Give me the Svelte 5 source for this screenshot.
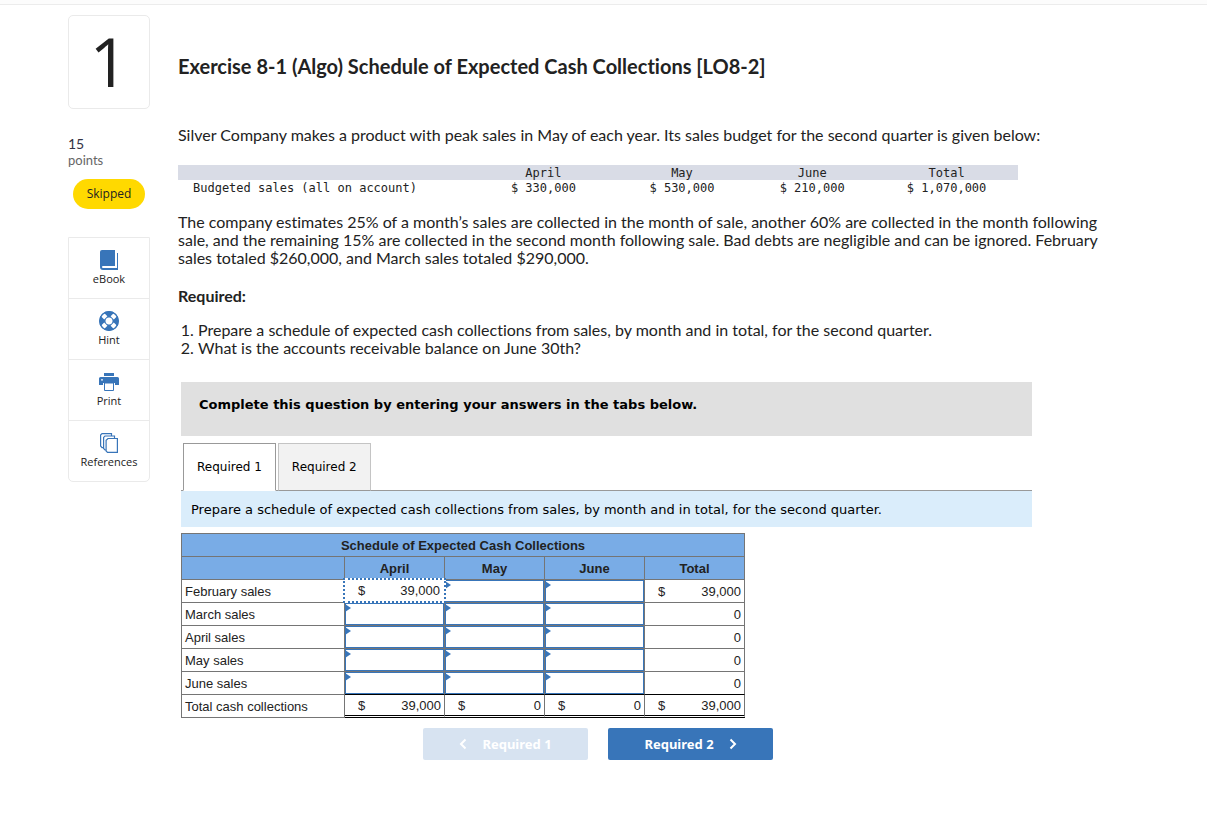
<!--
	Question page — one exercise with a sidebar of study tools, the question
	text, and a tabbed answer sheet.
-->

<script lang="ts">
	interface Row {
		label: string;
		cells: string[];
	}

	const months = ['April', 'May', 'June'];

	const budget = [
		{ head: 'April', value: '$ 330,000' },
		{ head: 'May', value: '$ 530,000' },
		{ head: 'June', value: '$ 210,000' },
		{ head: 'Total', value: '$ 1,070,000' }
	];

	const tabs = ['Required 1', 'Required 2'];

	let activeTab = $state(0);

	let rows = $state<Row[]>([
		{ label: 'February sales', cells: ['39,000', '', ''] },
		{ label: 'March sales', cells: ['', '', ''] },
		{ label: 'April sales', cells: ['', '', ''] },
		{ label: 'May sales', cells: ['', '', ''] },
		{ label: 'June sales', cells: ['', '', ''] }
	]);

	const toNumber = (text: string) => Number(text.replace(/[^0-9.-]/g, '')) || 0;
	const format = (n: number) => n.toLocaleString('en-US');
	const sum = (list: number[]) => list.reduce((a, b) => a + b, 0);

	let rowTotals = $derived(rows.map((row) => sum(row.cells.map(toNumber))));
	let monthTotals = $derived(months.map((_, m) => sum(rows.map((row) => toNumber(row.cells[m])))));
	let grandTotal = $derived(sum(rowTotals));
</script>

<div class="topbar"></div>

<div class="page">
	<aside class="sidebar">
		<div class="number">1</div>
		<div class="points">
			<span class="points-value">15</span>
			<span class="points-label">points</span>
		</div>
		<div class="status">Skipped</div>

		<nav class="tools">
			<a class="tool" href="#ebook">
				<svg width="20" height="20" viewBox="0 0 20 20" aria-hidden="true">
					<path d="M3 0h13v16H4a1 1 0 0 0-1 1 1 1 0 0 0 1 1h14V3h1v17H4a3 3 0 0 1-3-3V2a2 2 0 0 1 2-2z" fill="#3875b9" />
				</svg>
				eBook
			</a>
			<a class="tool" href="#hint">
				<svg width="20" height="20" viewBox="0 0 20 20" aria-hidden="true">
					<circle cx="10" cy="10" r="6.8" fill="none" stroke="#3875b9" stroke-width="6.2" />
					<path
						d="M6.800 6.800 3.800 3.800M13.200 6.800 16.200 3.800M6.800 13.200 3.800 16.200M13.200 13.200 16.200 16.200"
						stroke="#fff"
						stroke-width="4.500"
					/>
					<circle cx="10" cy="10" r="9.300" fill="none" stroke="#3875b9" stroke-width="1.200" />
					<circle cx="10" cy="10" r="4" fill="#fff" stroke="#3875b9" stroke-width="0.800" />
				</svg>
				Hint
			</a>
			<a class="tool" href="#print">
				<svg width="20" height="20" viewBox="0 0 20 20" aria-hidden="true">
					<path d="M5 1h10v3H5z" fill="#3875b9" />
					<path d="M1.500 5h17A1.500 1.500 0 0 1 20 6.500V13h-4v-2H4v2H0V6.500A1.500 1.500 0 0 1 1.500 5z" fill="#3875b9" />
					<path d="M5.500 11h9v7.500h-9z" fill="#fff" stroke="#3875b9" />
					<circle cx="3" cy="7.800" r="0.900" fill="#fff" />
				</svg>
				Print
			</a>
			<a class="tool" href="#references">
				<svg width="20" height="20" viewBox="0 0 20 20" aria-hidden="true">
					<g fill="#fff" stroke="#3875b9" stroke-width="1.200">
						<path d="M3 .6h9.500v14H3L1.600 13V2z" />
						<path d="M6 3h9.500v14H6l-1.400-1.500V4.400z" />
						<path d="M9 5.500h9.400v13.900H8.500l-1.400-1.500V7.300z" />
					</g>
				</svg>
				References
			</a>
		</nav>
	</aside>

	<main class="question">
		<h1>Exercise 8-1 (Algo) Schedule of Expected Cash Collections [LO8-2]</h1>

		<p>
			Silver Company makes a product with peak sales in May of each year. Its sales budget for the
			second quarter is given below:
		</p>

		<table class="budget">
			<colgroup>
				<col class="w-label" />
				<col class="w-april" />
				<col class="w-may" />
				<col class="w-june" />
				<col />
			</colgroup>
			<thead>
				<tr>
					<td></td>
					{#each budget as col}
						<th scope="col">{col.head}</th>
					{/each}
				</tr>
			</thead>
			<tbody>
				<tr>
					<th scope="row" class="budget-label">Budgeted sales (all on account)</th>
					{#each budget as col}
						<td>{col.value}</td>
					{/each}
				</tr>
			</tbody>
		</table>

		<p>
			The company estimates 25% of a month’s sales are collected in the month of sale, another 60%
			are collected in the month following sale, and the remaining 15% are collected in the second
			month following sale. Bad debts are negligible and can be ignored. February sales totaled
			$260,000, and March sales totaled $290,000.
		</p>

		<h2>Required:</h2>

		<ol>
			<li>
				Prepare a schedule of expected cash collections from sales, by month and in total, for the
				second quarter.
			</li>
			<li>What is the accounts receivable balance on June 30th?</li>
		</ol>

		<section class="answer">
			<div class="banner">Complete this question by entering your answers in the tabs below.</div>

			<div class="tabs" role="tablist">
				{#each tabs as tab, i}
					<button
						class="tab"
						class:active={activeTab === i}
						role="tab"
						aria-selected={activeTab === i}
						onclick={() => (activeTab = i)}>{tab}</button
					>
				{/each}
			</div>

			<div class="instruction">
				Prepare a schedule of expected cash collections from sales, by month and in total, for the
				second quarter.
			</div>

			<table class="sheet">
				<thead>
					<tr>
						<th colspan="5">Schedule of Expected Cash Collections</th>
					</tr>
					<tr>
						<th class="col-label"></th>
						{#each months as month}
							<th class="col-money" scope="col">{month}</th>
						{/each}
						<th class="col-money" scope="col">Total</th>
					</tr>
				</thead>
				<tbody>
					{#each rows as row, r}
						<tr>
							<th scope="row">{row.label}</th>
							{#each months as month, m}
								<td class="editable">
									<div class="entry" class:selected={r === 0 && m === 0}>
										{#if row.cells[m]}<span>$</span>{/if}
										<input type="text" aria-label="{row.label}, {month}" bind:value={row.cells[m]} />
									</div>
								</td>
							{/each}
							<td>
								<div class="money">
									<span>{r === 0 ? '$' : ''}</span>
									<span>{format(rowTotals[r])}</span>
								</div>
							</td>
						</tr>
					{/each}
				</tbody>
				<tfoot>
					<tr>
						<th scope="row">Total cash collections</th>
						{#each [...monthTotals, grandTotal] as total}
							<td>
								<div class="money"><span>$</span><span>{format(total)}</span></div>
							</td>
						{/each}
					</tr>
				</tfoot>
			</table>

			<div class="pager">
				<button class="step" disabled={activeTab === 0} onclick={() => (activeTab = 0)}>
					<svg width="8" height="12" viewBox="0 0 8 12" aria-hidden="true">
						<path d="M6.500 1.500 2 6l4.500 4.500" />
					</svg>
					Required 1
				</button>
				<button class="step" disabled={activeTab === 1} onclick={() => (activeTab = 1)}>
					Required 2
					<svg width="8" height="12" viewBox="0 0 8 12" aria-hidden="true">
						<path d="M1.500 1.500 6 6l-4.500 4.500" />
					</svg>
				</button>
			</div>
		</section>
	</main>
</div>

<style>
	:global(body) {
		background: #fff;
		color: #222;
		font-family: Lato, sans-serif;
		font-variant-ligatures: none;
	}

	.topbar {
		height: 4px;
		background: #fcfcfc;
		border-bottom: 1px solid #ececec;
	}

	.page {
		display: flex;
		gap: 28px;
		padding: 10px 100px 40px 68px;
	}

	/* ── Sidebar ── */
	.sidebar {
		flex: none;
		width: 82px;
	}

	.number {
		height: 92px;
		border: 1px solid #eaeaea;
		border-radius: 5px;
		font-family: 'Open Sans', sans-serif;
		font-size: 68px;
		line-height: 90px;
		text-align: center;
	}

	.points {
		display: flex;
		flex-direction: column;
		margin-top: 26px;
		line-height: 17px;
	}

	.points-value {
		font-size: 14px;
		color: #334;
	}

	.points-label {
		font-size: 13px;
		color: #666;
	}

	.status {
		width: 72px;
		margin: 10px auto 0;
		border-radius: 15px;
		background: #ffd900;
		font-family: 'Open Sans', sans-serif;
		font-size: 12px;
		line-height: 30px;
		text-align: center;
	}

	.tools {
		margin-top: 28px;
		border: 1px solid #eaeaea;
		border-radius: 0 0 5px 5px;
	}

	.tool {
		display: flex;
		flex-direction: column;
		align-items: center;
		gap: 1px;
		height: 48px;
		padding-top: 12px;
		color: #222;
		font-family: 'Open Sans', sans-serif;
		font-size: 11px;
		line-height: 15px;
		text-decoration: none;
	}

	.tool + .tool {
		border-top: 1px solid #eaeaea;
	}

	/* ── Question text ── */
	.question {
		flex: 1;
		min-width: 0;
		font-size: 16px;
		line-height: 18px;
	}

	h1 {
		margin: 39px 0 48px;
		font-size: 20px;
		line-height: 24px;
	}

	p {
		margin: 0;
	}

	h2 {
		margin: 20px 0 16px;
		font-size: 16px;
		line-height: 18px;
	}

	ol {
		margin: 0 0 25px;
		padding-left: 20px;
	}

	.budget {
		width: 100%;
		max-width: 840px;
		margin: 21px 0 18px;
		border-collapse: collapse;
		table-layout: fixed;
		font-family: 'DejaVu Sans Mono', monospace;
		font-size: 12px;
		line-height: 14px;
		text-align: center;
	}

	.w-label {
		width: 35%;
	}

	.w-april {
		width: 17%;
	}

	.w-may {
		width: 16%;
	}

	.w-june {
		width: 15%;
	}

	.budget thead {
		background: #d9dce6;
	}

	.budget th,
	.budget td {
		padding: 1px 0 0;
		font-weight: normal;
	}

	.budget td:empty {
		height: 14px;
	}

	.budget .budget-label {
		padding-left: 15px;
		text-align: left;
	}

	/* ── Answer area ── */
	.answer {
		max-width: 851px;
		margin-left: 3px;
		color: #000;
		font-family: 'DejaVu Sans', Verdana, sans-serif;
		font-size: 13px;
	}

	.banner {
		height: 40px;
		padding: 14px 18px 0;
		background: #e0e0e0;
		font-weight: bold;
	}

	.tabs {
		display: flex;
		gap: 2px;
		margin-top: 7px;
		padding-left: 2px;
		border-bottom: 1px solid #999;
	}

	.tab {
		height: 48px;
		margin-bottom: -1px;
		padding: 0 13px;
		border: 1px solid #c4c4c4;
		border-bottom-color: #999;
		background: #f2f2f2;
		color: #000;
		font-family: inherit;
		font-size: 12px;
		cursor: pointer;
	}

	.tab.active {
		border-color: #999;
		border-bottom-color: #fff;
		background: #fff;
	}

	.instruction {
		padding: 10px 10px 8px;
		background: #daedfb;
	}

	/* ── Spreadsheet ── */
	.sheet {
		width: 564px;
		margin-top: 6px;
		border: 1px solid #757575;
		border-width: 1px 0 0 1px;
		border-collapse: separate;
		border-spacing: 0;
		color: #222;
		font-family: 'Liberation Sans', Arial, sans-serif;
		font-size: 13px;
		line-height: 20px;
	}

	.sheet th,
	.sheet td {
		box-sizing: border-box;
		height: 23px;
		padding: 2px 0 0;
		border: 1px solid #757575;
		border-width: 0 1px 1px 0;
	}

	.sheet .editable {
		padding: 0;
	}

	.sheet thead th {
		background: #79ace6;
	}

	.sheet .col-money {
		width: 100px;
	}

	.sheet tbody th,
	.sheet tfoot th {
		padding-left: 3px;
		font-weight: normal;
		text-align: left;
	}

	.sheet tbody tr:last-child td {
		border-bottom-color: #000;
	}

	.sheet tfoot td {
		border-bottom: 3px double #000;
		line-height: 18px;
	}

	.money {
		display: flex;
		justify-content: space-between;
		padding: 0 3px 0 13px;
	}

	.entry {
		position: relative;
		display: flex;
		box-sizing: border-box;
		height: 22px;
		border: 1px solid #3875b9;
	}

	.entry input {
		flex: 1;
		width: 0;
		min-width: 0;
		padding: 0 3px;
		border: none;
		outline: none;
		background: none;
		color: inherit;
		font: inherit;
		text-align: right;
	}

	/* Corner marker of an editable cell */
	.entry::before {
		content: '';
		position: absolute;
		top: 0;
		left: -1px;
		border: 4px solid transparent;
		border-left: 6px solid #3875b9;
		border-right: none;
	}

	.entry.selected {
		z-index: 1;
		border-color: transparent;
		padding-left: 12px;
	}

	.entry.selected::before {
		inset: -3px -3px -2px -3px;
		z-index: -1;
		border: 2px dotted #3875b9;
		background: #fff;
	}

	/* ── Pager ── */
	.pager {
		display: flex;
		justify-content: center;
		gap: 20px;
		max-width: 834px;
		margin-top: 10px;
	}

	.step {
		display: flex;
		align-items: center;
		justify-content: center;
		gap: 15px;
		width: 165px;
		height: 32px;
		border: none;
		border-radius: 2px;
		background: #3875b9;
		color: #fff;
		font-family: 'Noto Sans', sans-serif;
		font-size: 13px;
		font-weight: bold;
		cursor: pointer;
	}

	.step:disabled {
		background: #d7e3f1;
		cursor: default;
	}

	.step path {
		fill: none;
		stroke: currentColor;
		stroke-width: 2;
	}
</style>
